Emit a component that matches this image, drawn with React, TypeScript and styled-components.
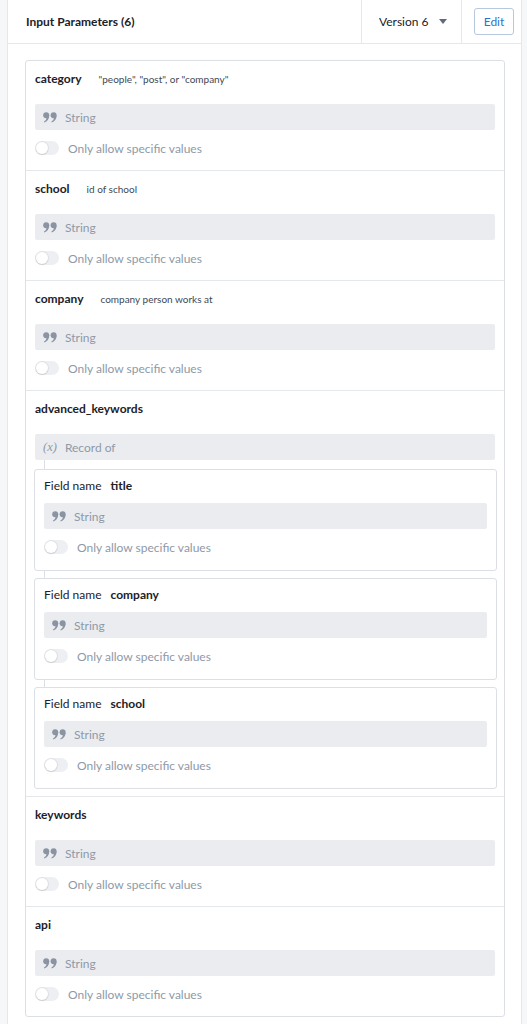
import React from "react";
import styled, { createGlobalStyle } from "styled-components";

const colors = {
  page: "#f6f7f9",
  line: "#e5e8eb",
  cardLine: "#dce0e5",
  text: "#1c2127",
  muted: "#8f99a8",
  field: "#ebecef",
  blue: "#2d72d2",
};

type Param = {
  name: string;
  desc?: string;
  fields?: string[];
};

const params: Param[] = [
  { name: "category", desc: '"people", "post", or "company"' },
  { name: "school", desc: "id of school" },
  { name: "company", desc: "company person works at" },
  { name: "advanced_keywords", fields: ["title", "company", "school"] },
  { name: "keywords" },
  { name: "api" },
];

const QuoteIcon = () => (
  <svg width="14" height="11" viewBox="0 0 14 11" fill="#8a94a3">
    <circle cx="3.2" cy="3.3" r="3" />
    <path d="M6.2 3.6 C6.2 7 4.2 9.6 1.3 10.6 L0.9 9.7 C2.6 8.8 3.5 7.4 3.6 5.6 Z" />
    <circle cx="10.6" cy="3.3" r="3" />
    <path d="M13.6 3.6 C13.6 7 11.6 9.6 8.7 10.6 L8.3 9.7 C10 8.8 10.9 7.4 11 5.6 Z" />
  </svg>
);

const StringField = () => (
  <Field>
    <QuoteIcon />
    <FieldText>String</FieldText>
  </Field>
);

const ToggleRow = () => (
  <Toggle>
    <Switch>
      <Knob />
    </Switch>
    <ToggleLabel>Only allow specific values</ToggleLabel>
  </Toggle>
);

const App = () => {
  return (
    <>
      <GlobalStyle />
      <Panel>
        <Header>
          <HeaderTitle>Input Parameters (6)</HeaderTitle>
          <VersionCell>
            Version 6
            <Caret />
          </VersionCell>
          <EditCell>
            <EditButton>Edit</EditButton>
          </EditCell>
        </Header>
        <Body>
          <Card>
            {params.map((param) => (
              <Section key={param.name} $nested={!!param.fields}>
                <TitleRow>
                  <ParamName>{param.name}</ParamName>
                  {param.desc && <ParamDesc>{param.desc}</ParamDesc>}
                </TitleRow>
                {param.fields ? (
                  <>
                    <Field>
                      <VarIcon>(x)</VarIcon>
                      <FieldText>Record of</FieldText>
                    </Field>
                    {param.fields.map((field, index) => (
                      <React.Fragment key={field}>
                        <Connector $first={index === 0} />
                        <SubCard>
                          <SubTitleRow>
                            <FieldLabel>Field name</FieldLabel>
                            <ParamName>{field}</ParamName>
                          </SubTitleRow>
                          <StringField />
                          <ToggleRow />
                        </SubCard>
                      </React.Fragment>
                    ))}
                  </>
                ) : (
                  <>
                    <StringField />
                    <ToggleRow />
                  </>
                )}
              </Section>
            ))}
          </Card>
        </Body>
      </Panel>
    </>
  );
};

export default App;

const GlobalStyle = createGlobalStyle`
  html, body {
    margin: 0;
    background: ${colors.page};
    font-family: Lato, "Noto Sans", sans-serif;
    color: ${colors.text};
    -webkit-font-smoothing: antialiased;
  }
  * {
    box-sizing: border-box;
  }
`;

const Panel = styled.div`
  margin-left: 7px;
  width: 515px;
  min-height: 1024px;
  background: #fff;
  border-left: 1px solid ${colors.line};
  border-right: 1px solid ${colors.line};
`;

const Header = styled.div`
  display: flex;
  align-items: stretch;
  height: 44px;
  border-bottom: 1px solid ${colors.line};
`;

const HeaderTitle = styled.div`
  flex: 1 1 auto;
  display: flex;
  align-items: center;
  padding-left: 18px;
  font-size: 12px;
  font-weight: 700;
`;

const VersionCell = styled.div`
  display: flex;
  align-items: center;
  gap: 10px;
  width: 100px;
  padding-left: 17px;
  border-left: 1px solid ${colors.line};
  font-size: 12px;
`;

const Caret = styled.span`
  width: 0;
  height: 0;
  border-left: 4px solid transparent;
  border-right: 4px solid transparent;
  border-top: 5px solid #5f6b7c;
`;

const EditCell = styled.div`
  display: flex;
  align-items: center;
  padding: 0 7px 0 12px;
  border-left: 1px solid ${colors.line};
`;

const EditButton = styled.button`
  width: 40px;
  height: 27px;
  padding: 0;
  background: #fff;
  border: 1px solid #b8c7dd;
  border-radius: 3px;
  color: ${colors.blue};
  font-family: inherit;
  font-size: 12px;
`;

const Body = styled.div`
  padding: 16px 16px 8px 17px;
`;

const Card = styled.div`
  border: 1px solid ${colors.cardLine};
  border-radius: 3px;
`;

const Section = styled.div<{ $nested?: boolean }>`
  padding: 8px 9px ${(p) => (p.$nested ? "7px" : "13px")};
  & + & {
    border-top: 1px solid ${colors.line};
  }
`;

const TitleRow = styled.div`
  display: flex;
  align-items: baseline;
  gap: 17px;
  height: 20px;
  line-height: 20px;
  margin-bottom: 15px;
`;

const ParamName = styled.span`
  font-size: 12px;
  font-weight: 700;
`;

const ParamDesc = styled.span`
  font-size: 10px;
  color: #404854;
`;

const Field = styled.div`
  display: flex;
  align-items: center;
  gap: 8px;
  height: 26px;
  padding-left: 8px;
  background: ${colors.field};
  border-radius: 2px;
`;

const FieldText = styled.span`
  font-size: 12px;
  color: ${colors.muted};
`;

const VarIcon = styled.span`
  font-family: "Liberation Serif", serif;
  font-style: italic;
  font-size: 12.5px;
  color: ${colors.muted};
`;

const Toggle = styled.div`
  display: flex;
  align-items: center;
  gap: 9px;
  height: 18px;
  margin-top: 9px;
`;

const Switch = styled.span`
  position: relative;
  width: 24px;
  height: 14px;
  border-radius: 7px;
  background: #edeff2;
`;

const Knob = styled.span`
  position: absolute;
  left: 1px;
  top: 1px;
  width: 12px;
  height: 12px;
  border-radius: 50%;
  background: #fff;
  box-shadow: 0 0 0 1px rgba(17, 20, 24, 0.06), 0 1px 1px rgba(17, 20, 24, 0.1);
`;

const ToggleLabel = styled.span`
  font-size: 12px;
  color: ${colors.muted};
`;

const Connector = styled.div<{ $first?: boolean }>`
  width: 1px;
  height: ${(p) => (p.$first ? "9px" : "7px")};
  margin-left: 9px;
  background: ${colors.cardLine};
`;

const SubCard = styled.div`
  margin: 0 -2px 0 -1px;
  padding: 6px 9px 14px;
  border: 1px solid ${colors.cardLine};
  border-radius: 3px;
`;

const SubTitleRow = styled.div`
  display: flex;
  align-items: baseline;
  gap: 9px;
  height: 20px;
  line-height: 20px;
  margin-bottom: 7px;
`;

const FieldLabel = styled.span`
  font-size: 12px;
`;
